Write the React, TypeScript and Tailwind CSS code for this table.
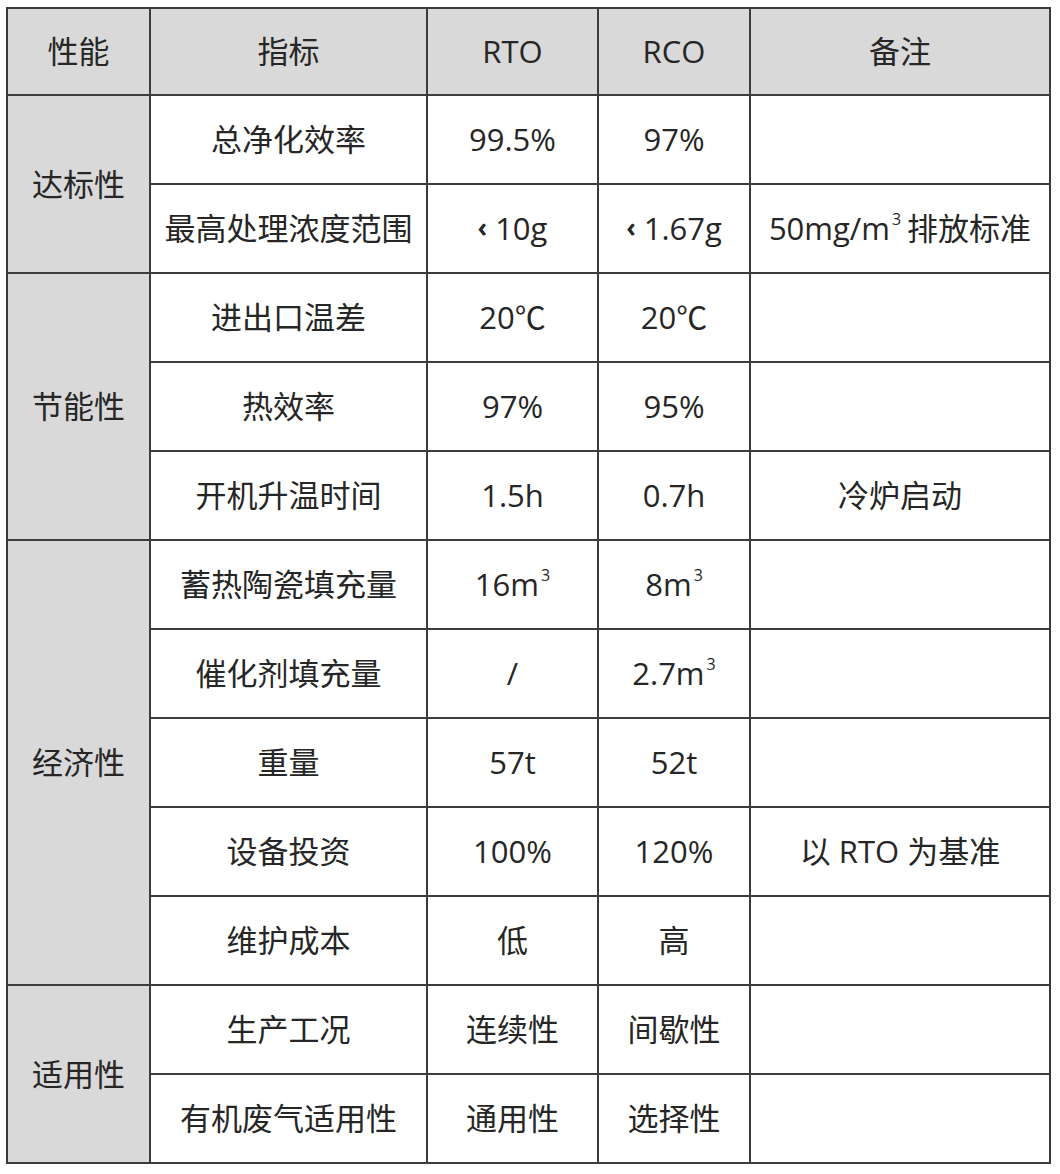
import React from 'react';

type Row = {
  name: React.ReactNode;
  rto: React.ReactNode;
  rco: React.ReactNode;
  note?: React.ReactNode;
};

type Group = {
  label: string;
  rows: Row[];
};

// superscript "3" for cubic metres
const Sup3 = ({ className = '' }: { className?: string }) => (
  <span className={`inline-block text-[16px] align-top -mt-[2px] ml-[2px] ${className}`}>3</span>
);

const M3 = ({ pre }: { pre: string }) => (
  <span>
    {pre}m<Sup3 />
  </span>
);

const Lt = () => (
  <span className="inline-block text-[26px] font-bold relative -top-[3px] mr-[8px]">‹</span>
);

const groups: Group[] = [
  {
    label: '达标性',
    rows: [
      { name: '总净化效率', rto: '99.5%', rco: '97%' },
      {
        name: '最高处理浓度范围',
        rto: <span><Lt />10g</span>,
        rco: <span><Lt />1.67g</span>,
        note: (
          <span className="whitespace-nowrap">
            50mg/m<Sup3 className="mr-[6px]" />排放标准
          </span>
        )
      }
    ]
  },
  {
    label: '节能性',
    rows: [
      { name: '进出口温差', rto: '20℃', rco: '20℃' },
      { name: '热效率', rto: '97%', rco: '95%' },
      { name: '开机升温时间', rto: '1.5h', rco: '0.7h', note: '冷炉启动' }
    ]
  },
  {
    label: '经济性',
    rows: [
      { name: '蓄热陶瓷填充量', rto: <M3 pre="16" />, rco: <M3 pre="8" /> },
      { name: '催化剂填充量', rto: '/', rco: <M3 pre="2.7" /> },
      { name: '重量', rto: '57t', rco: '52t' },
      { name: '设备投资', rto: '100%', rco: '120%', note: '以 RTO 为基准' },
      { name: '维护成本', rto: '低', rco: '高' }
    ]
  },
  {
    label: '适用性',
    rows: [
      { name: '生产工况', rto: '连续性', rco: '间歇性' },
      { name: '有机废气适用性', rto: '通用性', rco: '选择性' }
    ]
  }
];

const cell = 'border-2 border-[#3c3c3c] text-center align-middle p-0';

export default function App() {
  return (
    <div
      className="w-[1060px] h-[1174px] bg-white pt-[7px] pl-[6px] text-[#262626] text-[31px] leading-none"
      style={{ fontFamily: '"Open Sans", "Noto Sans CJK SC", sans-serif' }}
    >
      <table className="table-fixed border-collapse w-[1043px]">
        <colgroup>
          <col className="w-[143px]" />
          <col className="w-[277px]" />
          <col className="w-[171px]" />
          <col className="w-[152px]" />
          <col className="w-[300px]" />
        </colgroup>
        <thead>
          <tr className="h-[87px] bg-[#d9d9d9]">
            <th className={`${cell} font-normal`}>性能</th>
            <th className={`${cell} font-normal`}>指标</th>
            <th className={`${cell} font-normal`}>RTO</th>
            <th className={`${cell} font-normal`}>RCO</th>
            <th className={`${cell} font-normal`}>备注</th>
          </tr>
        </thead>
        <tbody>
          {groups.map((g) =>
            g.rows.map((r, i) => (
              <tr key={`${g.label}-${i}`} className="h-[89px]">
                {i === 0 && (
                  <td rowSpan={g.rows.length} className={`${cell} bg-[#d9d9d9]`}>
                    {g.label}
                  </td>
                )}
                <td className={cell}>{r.name}</td>
                <td className={cell}>{r.rto}</td>
                <td className={cell}>{r.rco}</td>
                <td className={cell}>{r.note}</td>
              </tr>
            ))
          )}
        </tbody>
      </table>
    </div>
  );
}
